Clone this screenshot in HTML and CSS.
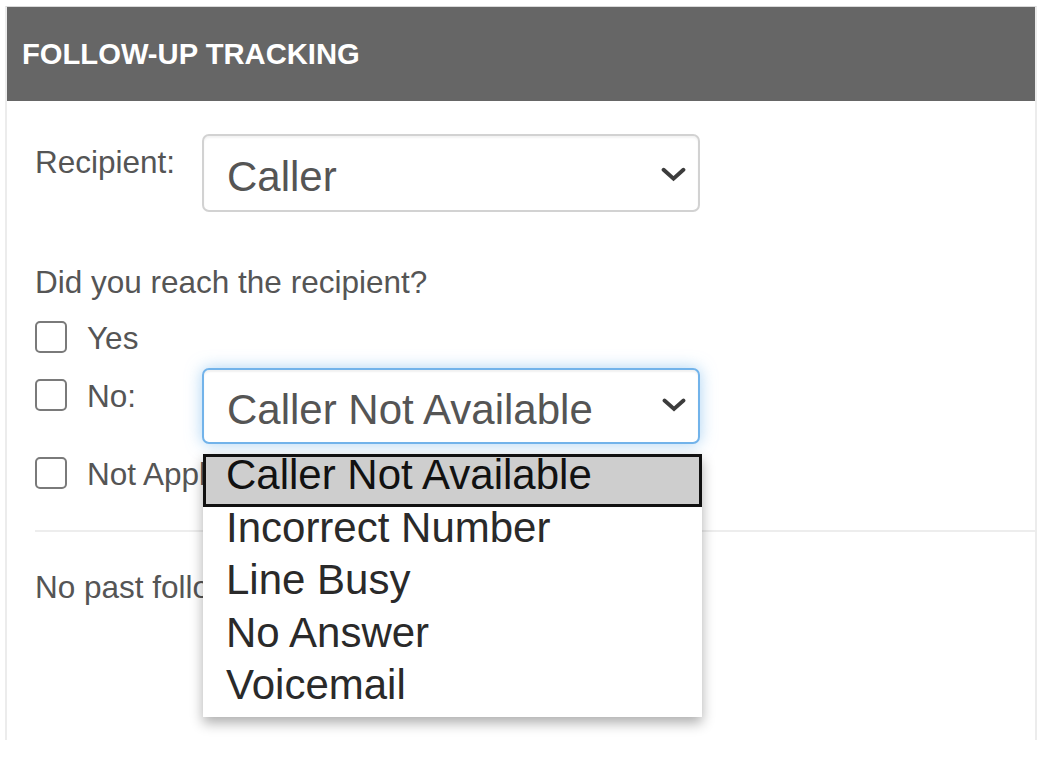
FILE: index.html
```html
<!DOCTYPE html>
<html lang="en">
<head>
<meta charset="utf-8">
<title>Follow-up Tracking</title>
<link rel="stylesheet" href="styles.css">
</head>
<body>
<section class="panel">
  <header class="panel-heading">FOLLOW-UP TRACKING</header>
  <div class="panel-body">
    <div class="form-row">
      <label class="field-label">Recipient:</label>
      <div class="select">
        <span class="select-value">Caller</span>
        <svg class="chevron" viewBox="0 0 24 14" width="25" height="15" aria-hidden="true"><polyline points="2.5,2.5 12,11 21.5,2.5" fill="none" stroke="#3c3c3c" stroke-width="3.8" stroke-linecap="round" stroke-linejoin="miter"/></svg>
      </div>
    </div>

    <p class="question">Did you reach the recipient?</p>

    <div class="choices">
      <div class="choice">
        <span class="checkbox"></span>
        <span class="choice-text">Yes</span>
      </div>
      <div class="choice choice-with-select">
        <div class="choice-label">
          <span class="checkbox"></span>
          <span class="choice-text">No:</span>
        </div>
        <div class="select-wrap">
          <div class="select select-focus">
            <span class="select-value">Caller Not Available</span>
            <svg class="chevron" viewBox="0 0 24 14" width="24" height="14" aria-hidden="true"><polyline points="2.5,2.5 12,11 21.5,2.5" fill="none" stroke="#3c3c3c" stroke-width="3.8" stroke-linecap="round" stroke-linejoin="miter"/></svg>
          </div>
          <ul class="dropdown">
            <li class="option option-active">Caller Not Available</li>
            <li class="option">Incorrect Number</li>
            <li class="option">Line Busy</li>
            <li class="option">No Answer</li>
            <li class="option">Voicemail</li>
          </ul>
        </div>
      </div>
      <div class="choice">
        <span class="checkbox"></span>
        <span class="choice-text">Not Applicable</span>
      </div>
    </div>

    <hr class="divider">

    <p class="history">No past follow-ups recorded.</p>
  </div>
</section>
</body>
</html>
```

FILE: styles.css
```css
html, body {
  margin: 0;
  padding: 0;
  background: #ffffff;
}

body {
  font-family: "Liberation Sans", Arial, Helvetica, sans-serif;
  color: #555555;
}

.panel {
  box-sizing: border-box;
  margin: 6px 0 0 5px;
  width: 1032px;
  height: 734px;
  border-top: 1px solid #d9d9d9;
  border-left: 2px solid #ececec;
  border-right: 2px solid #ececec;
  background: #ffffff;
}

.panel-heading {
  display: flex;
  align-items: center;
  height: 94px;
  padding-left: 15px;
  padding-top: 1px;
  box-sizing: border-box;
  background: #666666;
  color: #ffffff;
  font-weight: bold;
  font-size: 29.2px;
}

.panel-body {
  padding: 33px 0 0 28px;
}

.form-row {
  display: flex;
  align-items: flex-start;
}

.field-label {
  width: 167px;
  flex: none;
  padding-top: 6px;
  font-size: 31.5px;
  line-height: 44.8px;
}

.select {
  box-sizing: border-box;
  width: 498px;
  height: 78px;
  display: flex;
  align-items: center;
  justify-content: space-between;
  padding: 7px 12px 0 23px;
  border: 2px solid #d2d2d2;
  border-radius: 7px;
  background: #ffffff;
  box-shadow: inset 0 2px 2px rgba(0, 0, 0, 0.05);
  font-size: 42px;
  line-height: 46px;
  color: #555555;
}

.select-value {
  white-space: nowrap;
}

.chevron {
  flex: none;
  margin-top: -5px;
}

.select-focus {
  height: 76px;
  border-color: #72b3ea;
  box-shadow: inset 0 2px 2px rgba(0, 0, 0, 0.06), 0 0 16px rgba(102, 175, 233, 0.55);
}

.select-focus .chevron {
  margin-top: -9px;
}

.question {
  margin: 48px 0 0 0;
  font-size: 31.5px;
  line-height: 44.8px;
}

.choices {
  margin-top: 11px;
  display: flex;
  flex-direction: column;
  gap: 7.6px;
}

.choice {
  display: flex;
  align-items: center;
  font-size: 31.5px;
  line-height: 44.8px;
}

.choice-with-select {
  align-items: flex-start;
}

.choice-label {
  display: flex;
  align-items: center;
  width: 167px;
  flex: none;
  padding-top: 5.7px;
}

.checkbox {
  box-sizing: border-box;
  flex: none;
  width: 32px;
  height: 32px;
  margin-right: 20px;
  margin-top: -2px;
  border: 2px solid #7a7a7a;
  border-radius: 5px;
  background: #ffffff;
}

.choice-text {
  white-space: nowrap;
}

.select-wrap {
  position: relative;
}

.dropdown {
  position: absolute;
  top: 86px;
  left: 1px;
  width: 499px;
  margin: 0;
  padding: 0;
  list-style: none;
  background: #ffffff;
  box-shadow: 0 6px 12px rgba(0, 0, 0, 0.32);
  z-index: 10;
}

.option {
  box-sizing: border-box;
  height: 52.5px;
  padding-left: 23px;
  font-size: 42px;
  line-height: 41px;
  color: #2a2a2a;
  white-space: nowrap;
}

.option-active {
  background: #cecece;
  color: #111111;
  box-shadow: inset 0 0 0 3px #111111;
}

.divider {
  margin: 33.5px 0 0 0;
  height: 2px;
  border: 0;
  background: #ededed;
}

.history {
  margin: 32.7px 0 0 0;
  font-size: 31.5px;
  line-height: 44.8px;
}
```
